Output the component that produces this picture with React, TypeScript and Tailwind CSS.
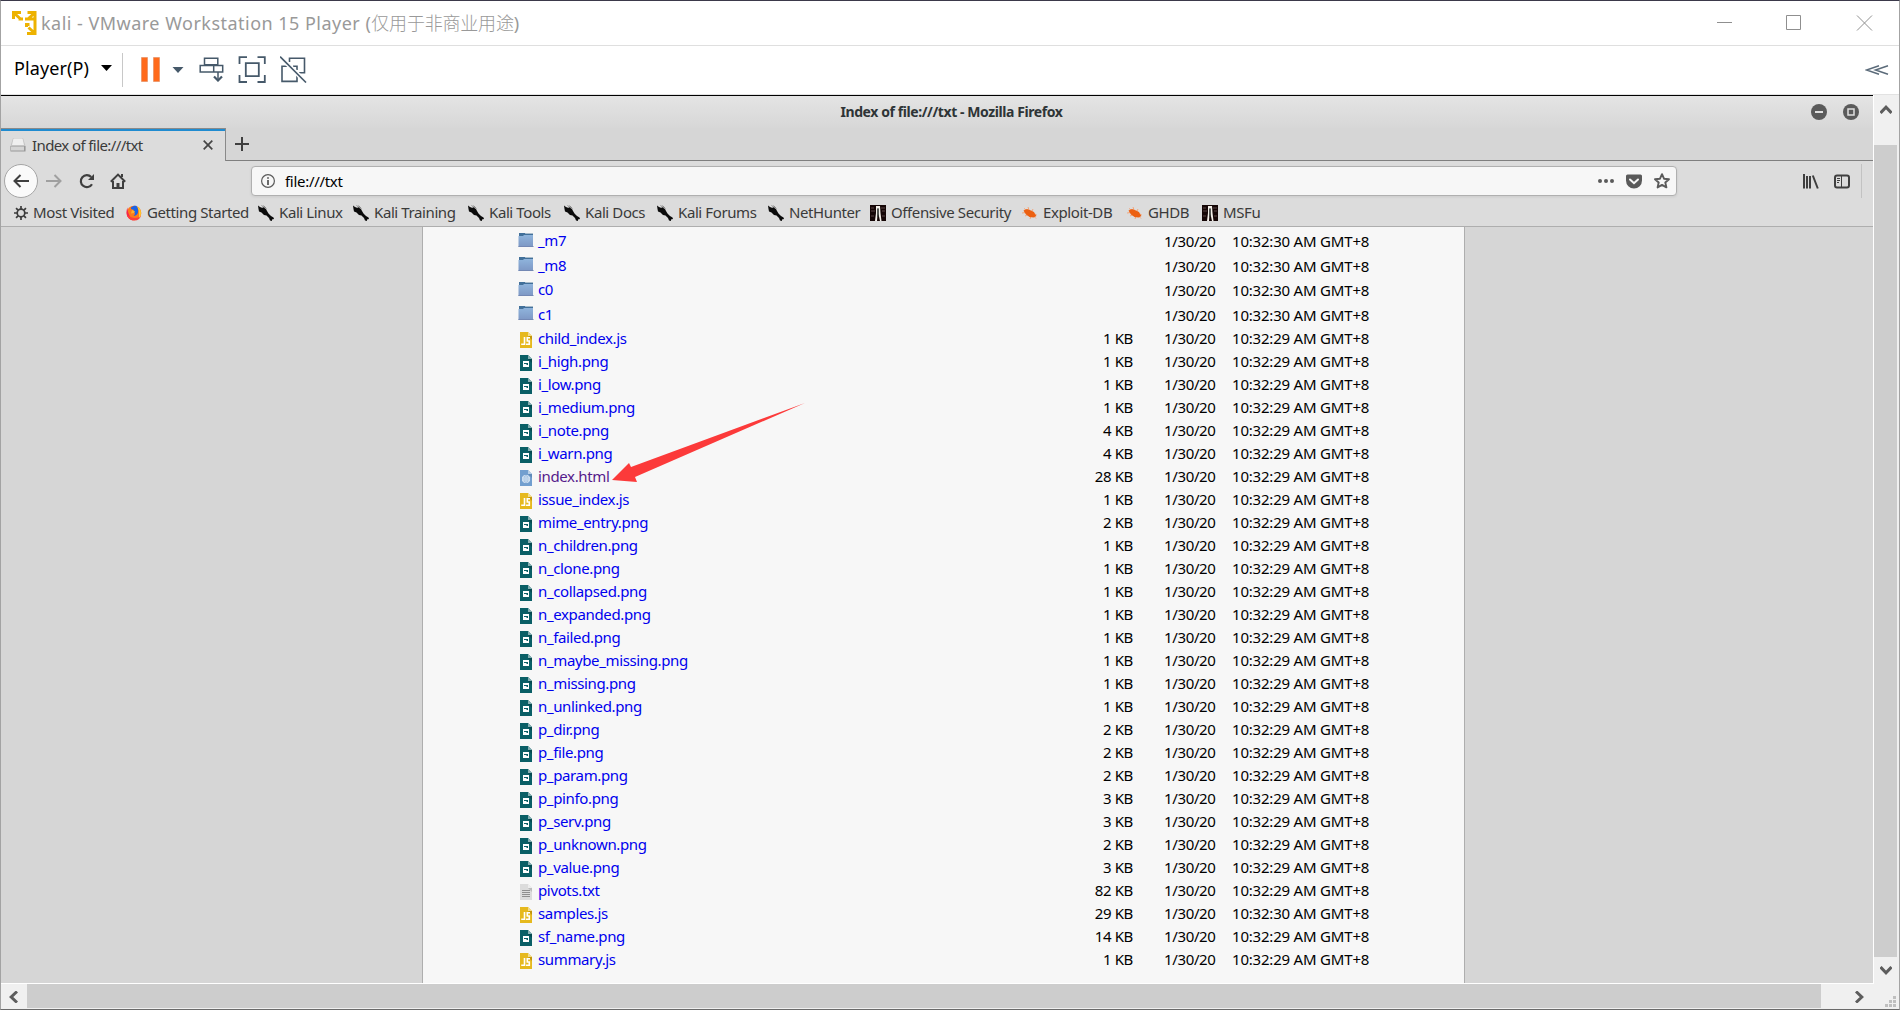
import React from 'react';

type FileKind = 'dir' | 'js' | 'png' | 'html' | 'txt';

interface Entry {
  name: string;
  kind: FileKind;
  size?: string;
  time?: string;
}

const ENTRIES: Entry[] = [
  { name: '_m7', kind: 'dir' },
  { name: '_m8', kind: 'dir' },
  { name: 'c0', kind: 'dir' },
  { name: 'c1', kind: 'dir' },
  { name: 'child_index.js', kind: 'js', size: '1 KB' },
  { name: 'i_high.png', kind: 'png', size: '1 KB' },
  { name: 'i_low.png', kind: 'png', size: '1 KB' },
  { name: 'i_medium.png', kind: 'png', size: '1 KB' },
  { name: 'i_note.png', kind: 'png', size: '4 KB' },
  { name: 'i_warn.png', kind: 'png', size: '4 KB' },
  { name: 'index.html', kind: 'html', size: '28 KB' },
  { name: 'issue_index.js', kind: 'js', size: '1 KB' },
  { name: 'mime_entry.png', kind: 'png', size: '2 KB' },
  { name: 'n_children.png', kind: 'png', size: '1 KB' },
  { name: 'n_clone.png', kind: 'png', size: '1 KB' },
  { name: 'n_collapsed.png', kind: 'png', size: '1 KB' },
  { name: 'n_expanded.png', kind: 'png', size: '1 KB' },
  { name: 'n_failed.png', kind: 'png', size: '1 KB' },
  { name: 'n_maybe_missing.png', kind: 'png', size: '1 KB' },
  { name: 'n_missing.png', kind: 'png', size: '1 KB' },
  { name: 'n_unlinked.png', kind: 'png', size: '1 KB' },
  { name: 'p_dir.png', kind: 'png', size: '2 KB' },
  { name: 'p_file.png', kind: 'png', size: '2 KB' },
  { name: 'p_param.png', kind: 'png', size: '2 KB' },
  { name: 'p_pinfo.png', kind: 'png', size: '3 KB' },
  { name: 'p_serv.png', kind: 'png', size: '3 KB' },
  { name: 'p_unknown.png', kind: 'png', size: '2 KB' },
  { name: 'p_value.png', kind: 'png', size: '3 KB' },
  { name: 'pivots.txt', kind: 'txt', size: '82 KB' },
  { name: 'samples.js', kind: 'js', size: '29 KB', time: '10:32:30 AM GMT+8' },
  { name: 'sf_name.png', kind: 'png', size: '14 KB' },
  { name: 'summary.js', kind: 'js', size: '1 KB' },
];

const FolderIcon = () => (
  <svg width="16" height="16" viewBox="0 0 16 16" className="-mt-[5px]">
    <defs>
      <linearGradient id="folder" x1="0" y1="0" x2="0" y2="1">
        <stop offset="0" stopColor="#8fb4dc" />
        <stop offset="1" stopColor="#7d97c4" />
      </linearGradient>
    </defs>
    <path d="M1 1h6l1 1h7v4H1z" fill="#42709a" />
    <path d="M8 1h7v1H8z" fill="#a9bccb" />
    <path d="M.5 4H5l1-1h9v12H.5z" fill="url(#folder)" />
    <path d="M.5 14h15v1H.5z" fill="#7388b4" />
  </svg>
);

const SHEET_COLORS = {
  js: ['#e6b91e', '#f3dc8e', '#c2960c'],
  png: ['#0a5f66', '#85afb2', '#064a50'],
  html: ['#729fcf', '#b8cfe7', '#5f8ab8'],
  txt: ['#dcdcdc', '#eeeeee', '#bcbcbc'],
};

const SheetIcon = ({ kind }: { kind: 'js' | 'png' | 'html' | 'txt' }) => {
  const [base, fold, shade] = SHEET_COLORS[kind];
  return (
    <svg width="16" height="16" viewBox="0 0 16 16">
      <path d="M2 0h8l4 4v12H2z" fill={base} />
      <path d="M10 0v4h4z" fill={fold} />
      <path d="M10 4h4v4z" fill={shade} />
      {kind === 'js' && (
        <path d="M6.500 5v7.300H3.200M12 5.800H9.300v3.200h2v3.300H8" fill="none" stroke="#fff" strokeWidth="1.600" />
      )}
      {kind === 'png' && (
        <>
          <path d="M5 6h6v6H5z" fill="#fff" />
          <path d="M6 8h4v2H9L8 9H6z" fill="#0a5f66" />
        </>
      )}
      {kind === 'html' && (
        <>
          <circle cx="8" cy="9" r="4" fill="#eaf2fa" />
          <path d="M4 9h8M8 5v8M5 7h6M5 11h6" stroke="#92b5db" strokeWidth=".6" fill="none" />
          <ellipse cx="8" cy="9" rx="2" ry="4" stroke="#92b5db" strokeWidth=".6" fill="none" />
        </>
      )}
      {kind === 'txt' && <path d="M4 6.500h8M4 8.500h8M4 10.500h8M4 12.500h8" stroke="#8f8f8f" />}
    </svg>
  );
};

const KaliIcon = () => (
  <svg width="16" height="16" viewBox="0 0 16 16">
    <path
      d="M0 .500l2 1.500 2.500 1L5 2l3 2 1 2 1.500 2.500L13 11l2.500 1.500.500 1.500-2 .500V16l-2-.500-1-2.500-2.500-2.500L6 10 3.500 7.500 1 6.500.500 4z"
      fill="#0b0b0b"
    />
    <path d="M3.500.500L7 3M5.500.500L8.500 3.500" stroke="#555" strokeWidth=".600" />
  </svg>
);

const OffsecIcon = () => (
  <svg width="16" height="16" viewBox="0 0 16 16">
    <path d="M0 0h16v16H0z" fill="#150606" />
    <path d="M1 3h3M1 6h4M11 3h4M12 6h3M1 11h3M12 11h3" stroke="#5d4646" />
    <path d="M6 1h4l.500 7 1 8H10L8.500 9V4h-1v5L7 16H5l1-8z" fill="#f5f0ea" />
    <path d="M7.500 3h1v9h-1z" fill="#26352f" />
  </svg>
);

const BugIcon = () => (
  <svg width="16" height="16" viewBox="0 0 16 16">
    <path
      d="M2 3.500l3 2M6 2l1 3M11 4l-1 2M0 8l4-.500M3 11l3-1.500M8 14l1-3M14 13.500l-2-2M14.500 9.500L12 9"
      stroke="#f2a67c"
      strokeWidth="1"
    />
    <path d="M1.500 5.500L5 4l4 1.500 3 1.500 1 2 1.500 2-3 1.500-4-.500L4 9.500 3 8z" fill="#ec6011" />
  </svg>
);

const FirefoxIcon = () => (
  <svg width="16" height="16" viewBox="0 0 16 16">
    <circle cx="8" cy="8" r="7.300" fill="#ff7a1a" />
    <path d="M1.500 2.500C-.500 7 0 14 7 15.400 4 12 1.500 8 1.500 2.500z" fill="#f5254b" />
    <path d="M1 10c1 3.500 4 5.500 7.500 5.500S14 13.500 15 11c-3 2.500-9 3-14-1z" fill="#ff3f3a" />
    <path d="M10.500 1c4.500 2 6 8 2.500 12 0-4 .500-8-2.500-12z" fill="#ffce2e" />
    <path d="M5 2.500C7 .500 9.500.500 10.500 1c1.500 2 2 4 1.500 6.500-.500 2.500-2.500 3.500-4.500 3C10 9 9 7.500 7 7l1-2-3-1z" fill="#1b63e6" />
    <path d="M6 5l3 1.500-1 1.500-3 .500z" fill="#ffb02a" />
  </svg>
);

const GearIcon = () => (
  <svg width="14" height="14" viewBox="0 0 14 14" fill="none" stroke="#3b3b3b">
    <circle cx="7" cy="7" r="3.800" strokeWidth="1.700" />
    <path
      d="M7 0v3M7 11v3M0 7h3M11 7h3M2.050 2.050l2 2M9.950 9.950l2 2M2.050 11.950l2-2M9.950 4.050l2-2"
      strokeWidth="1.700"
    />
  </svg>
);

const BOOKMARKS = [
  { label: 'Most Visited', icon: <GearIcon />, width: 'w-[112px]' },
  { label: 'Getting Started', icon: <FirefoxIcon />, width: 'w-[132px]' },
  { label: 'Kali Linux', icon: <KaliIcon />, width: 'w-[95px]' },
  { label: 'Kali Training', icon: <KaliIcon />, width: 'w-[115px]' },
  { label: 'Kali Tools', icon: <KaliIcon />, width: 'w-[96px]' },
  { label: 'Kali Docs', icon: <KaliIcon />, width: 'w-[93px]' },
  { label: 'Kali Forums', icon: <KaliIcon />, width: 'w-[111px]' },
  { label: 'NetHunter', icon: <KaliIcon />, width: 'w-[102px]' },
  { label: 'Offensive Security', icon: <OffsecIcon />, width: 'w-[152px]' },
  { label: 'Exploit-DB', icon: <BugIcon />, width: 'w-[105px]' },
  { label: 'GHDB', icon: <BugIcon />, width: 'w-[75px]' },
  { label: 'MSFu', icon: <OffsecIcon />, width: 'w-[80px]' },
];

const HostTitleBar = () => (
  <div className="flex h-[45px] shrink-0 items-center border-b border-[#dfdfdf] bg-white">
    <svg width="25" height="24" viewBox="0 0 25 24" className="ml-[11px] mt-[-1px]" fill="none" stroke="#edb200" strokeWidth="3">
      <path d="M1.500 8V1.500H9M2 2l6.500 6M15.500 1.500h7.500V8M22.500 2l-6 5.500M6.500 8H11M13 8h6M18.500 8h4.500v4M13 13.500h4.500M14.500 12v4M23 15.500v7h-8M22.500 22l-6-5.500M23 12v4" />
    </svg>
    <span className="ml-[4px] whitespace-nowrap text-[18px] leading-6 tracking-[0.480px] text-[#999]">
      kali - VMware Workstation 15 Player (
      <span className="text-[18px] font-light tracking-[-0.200px]">仅用于非商业用途</span>)
    </span>
    <svg width="156" height="16" viewBox="0 0 156 16" className="ml-auto mr-[26px] mt-[-1px]" fill="none" stroke="#8f8f8f">
      <path d="M0 7.500h15M69.500.500h14v14h-14zM140 .500l15 15M155 .500l-15 15" />
    </svg>
  </div>
);

const HostToolbar = () => (
  <div className="flex h-[49px] shrink-0 items-center border-b border-[#e2e2e2] bg-white">
    <span className="ml-[13px] mt-[-4px] w-[87px] whitespace-nowrap text-[18px] leading-6 tracking-[0.1px] text-black">Player(P)</span>
    <svg width="11" height="6" viewBox="0 0 11 6" className="mt-[-4px]">
      <path d="M0 0h11L5.500 6z" fill="#000" />
    </svg>
    <div className="ml-[10px] h-[34px] w-px bg-[#c8c8c8]" />
    <svg width="43" height="25" viewBox="0 0 43 25" className="ml-[18px] mt-[-2px]">
      <path d="M.500.500h6v24h-6zM12.500.500h6v24h-6z" fill="#ff6a1c" stroke="#e08a5c" strokeWidth=".6" />
      <path d="M31.500 10h11l-5.500 6z" fill="#46596a" />
    </svg>
    <svg width="25" height="25" viewBox="0 0 25 25" className="ml-[15px] mt-[-1px]" fill="none" stroke="#46596a" strokeWidth="1.500">
      <path d="M5.500 1.200h13.300v6.500H5.500zM1.200 8.500h13.500v6.500H1.200zM14.700 8.500h9v6.500h-9M19 15v9" />
      <path d="M15 19.500l4 4 4-4" strokeWidth="2.200" />
    </svg>
    <svg width="28" height="27" viewBox="0 0 28 27" className="ml-[14px] mt-[-2px]" fill="none" stroke="#46596a" strokeWidth="1.800">
      <path d="M1.500 8V1.200H9M19.500 1.200h7.300V8M26.800 19v7h-7.300M9 26H1.500v-7" />
      <path d="M7.800 7.200h13v13h-13z" />
    </svg>
    <svg width="27" height="27" viewBox="0 0 27 27" className="ml-[14px] mt-[-2px]" fill="none" stroke="#46596a" strokeWidth="1.600">
      <path d="M9.500 2.200h15v14.500H19M9.500 1.500V6M8 10.200H2v15.200h15V19M13 10.200h4V14" />
      <path d="M0 .500L26 26.500" stroke="#fff" strokeWidth="4.500" />
      <path d="M0 .500L26 26.500" />
    </svg>
    <svg width="24" height="10" viewBox="0 0 24 10" className="ml-auto mr-[10px]" fill="none" stroke="#5b6b7a" strokeWidth="1.500">
      <path d="M14 .800L1.500 5 14 9.200M23 .800L10.500 5 23 9.200" />
    </svg>
  </div>
);

const TitleAndTabs = () => (
  <div className="shrink-0 border-t border-black bg-[#d6d6d6]">
    <div className="flex h-[32px] items-center bg-gradient-to-b from-[#e4e4e4] to-[#d7d7d7]">
      <div className="w-[1786px] pl-[115px] text-center text-[14px] font-bold leading-5 tracking-[-0.42px] text-[#2e3436]">
        Index of file:///txt - Mozilla Firefox
      </div>
      <svg width="48" height="16" viewBox="0 0 48 16" className="ml-[24px]">
        <circle cx="8" cy="8" r="8" fill="#5a5a5a" />
        <path d="M4 7h8v2H4z" fill="#e0e0e0" />
        <circle cx="40" cy="8" r="8" fill="#5a5a5a" />
        <path d="M37 5h6v6h-6z" fill="none" stroke="#e0e0e0" strokeWidth="1.500" />
      </svg>
    </div>
    <div className="flex h-[33px]">
      <div className="flex w-[225px] items-center border-r border-t border-[#8a8a8a] bg-[#dcdcdc]">
        <div className="flex h-full w-full items-center border-t-2 border-[#1f8bd0] pb-[3px] pl-[9px] pr-[12px]">
          <svg width="16" height="14" viewBox="0 0 16 14">
            <path d="M3 0h10l2.500 8v4.500h-15V8z" fill="#c4c4c4" />
            <path d="M3.500.500h9L14 7H2z" fill="#efefef" />
            <path d="M.500 8h15v5.500H.500z" fill="#999" />
            <path d="M1 8.500h13v4H1z" fill="#d4d4d4" />
          </svg>
          <span className="ml-[6px] whitespace-nowrap text-[15px] leading-5 tracking-[-0.6px] text-[#3a3a3a]">Index of file:///txt</span>
          <svg width="10" height="10" viewBox="0 0 10 10" className="ml-auto" stroke="#454545" strokeWidth="1.700">
            <path d="M.700.700l8.600 8.600M9.300.700L.700 9.300" />
          </svg>
        </div>
      </div>
      <div className="flex-1 border-b border-[#7f7f7f] pl-[9px] pt-[9px]">
        <svg width="14" height="14" viewBox="0 0 14 14" stroke="#3f3f3f" strokeWidth="2">
          <path d="M0 7h14M7 0v14" />
        </svg>
      </div>
    </div>
  </div>
);

const NavBar = () => (
  <div className="flex h-[40px] shrink-0 items-center bg-[#dcdcdc]">
    <div className="ml-[3px] flex size-[34px] items-center justify-center rounded-full border border-[#a5a5a5] bg-[#fafafa]">
      <svg width="16" height="14" viewBox="0 0 16 14" fill="none" stroke="#3f3f3f" strokeWidth="2">
        <path d="M16 7H1.500M7.500 1l-6 6 6 6" />
      </svg>
    </div>
    <svg width="16" height="14" viewBox="0 0 16 14" className="ml-[8px]" fill="none" stroke="#a0a0a0" strokeWidth="2">
      <path d="M0 7h14.500M8.500 1l6 6-6 6" />
    </svg>
    <svg width="16" height="16" viewBox="0 0 16 16" className="ml-[17px]" fill="none" stroke="#3f3f3f" strokeWidth="2.200">
      <path d="M13 11.200A6 6 0 1 1 12.200 4" />
      <path d="M15 1v6H9z" fill="#3f3f3f" stroke="none" />
    </svg>
    <svg width="16" height="16" viewBox="0 0 16 16" className="ml-[15px]" fill="none" stroke="#3f3f3f" strokeWidth="2">
      <path d="M.800 8.800L8 1.600l7.200 7.200" />
      <path d="M3 8v7h10V8" />
      <path d="M6.500 15v-5h3v5z" fill="#3f3f3f" stroke="none" />
      <path d="M11 1h2v3h-2z" fill="#3f3f3f" stroke="none" />
    </svg>
    <div className="ml-[125px] flex h-[30px] w-[1426px] items-center rounded-[4px] border border-[#b0b0b0] bg-[#f7f7f7] pl-[9px] pr-[6px] shadow-[0_1px_3px_rgba(0,0,0,0.08)]">
      <svg width="14" height="14" viewBox="0 0 14 14" fill="none" stroke="#5a5a5a">
        <circle cx="7" cy="7" r="6.400" strokeWidth="1.200" />
        <path d="M7 6v5M7 3.200v1.600" strokeWidth="1.800" />
      </svg>
      <span className="ml-[10px] text-[15px] leading-5 tracking-[-0.3px] text-black">file:///txt</span>
      <svg width="16" height="4" viewBox="0 0 16 4" className="ml-auto" fill="#5a5a5a">
        <circle cx="2" cy="2" r="2" />
        <circle cx="8" cy="2" r="2" />
        <circle cx="14" cy="2" r="2" />
      </svg>
      <svg width="16" height="15" viewBox="0 0 16 15" className="ml-[12px]">
        <path d="M1.500.500h13a1.500 1.500 0 0 1 1.500 1.500v4.500a8 8 0 0 1-16 0V2A1.500 1.500 0 0 1 1.500.500z" fill="#5a5a5a" />
        <path d="M4 5.500l4 3.700 4-3.700" fill="none" stroke="#f7f7f7" strokeWidth="2" strokeLinecap="round" />
      </svg>
      <svg width="16" height="16" viewBox="0 0 16 16" className="ml-[12px]" fill="none" stroke="#5a5a5a" strokeWidth="1.900" strokeLinejoin="round">
        <path d="M8 1.200l2 4.500 5 .500-3.700 3.300 1.100 4.900L8 11.900l-4.400 2.500 1.100-4.900L1 6.200l5-.500z" />
      </svg>
    </div>
    <svg width="16" height="15" viewBox="0 0 16 15" className="ml-[126px]" fill="none" stroke="#3f3f3f" strokeWidth="2">
      <path d="M1 0v14.500M4 2v12.500M7 2v12.500M9.800 1.500l5 13" />
    </svg>
    <svg width="16" height="15" viewBox="0 0 16 15" className="ml-[15px]" fill="none" stroke="#3f3f3f">
      <rect x="1" y="1.500" width="14" height="12" rx="2" strokeWidth="2" />
      <path d="M7.500 2v11M3 4.500h3M3 6.500h3M3 8.500h2" />
    </svg>
    <div className="ml-[11px] h-[34px] w-px bg-[#c2c2c2]" />
  </div>
);

const BookmarksBar = () => (
  <div className="flex h-[26px] shrink-0 items-center border-b border-[#aeaeae] bg-[#dcdcdc] pb-[2px] pl-[13px] text-[15px] leading-5 tracking-[-0.4px] text-[#3a3a3a]">
    {BOOKMARKS.map((b) => (
      <div key={b.label} className={`flex shrink-0 items-center whitespace-nowrap ${b.width}`}>
        <span className="mr-[5px]">{b.icon}</span>
        <span className="-mt-[2px]">{b.label}</span>
      </div>
    ))}
  </div>
);

const DirectoryListing = () => (
  <div className="flex flex-1 justify-start overflow-hidden bg-[#d6d6d6] pl-[421px]">
    <div className="relative h-full w-[1043px] border-x border-[#aeaeae] bg-[#f7f7f7] pl-[95px] pt-[2px] text-[15px] tracking-[-0.36px] text-black">
      {ENTRIES.map((e) => (
        <div
          key={e.name}
          className={`flex items-center whitespace-nowrap ${e.kind === 'dir' ? 'h-[24.5px]' : 'h-[23px]'}`}
        >
          <span className="w-[20px] pt-[2px]">{e.kind === 'dir' ? <FolderIcon /> : <SheetIcon kind={e.kind} />}</span>
          <a
            className={`w-[500px] ${e.kind === 'html' ? 'text-[#551a8b]' : 'text-[#0000ee]'} ${e.kind === 'dir' ? '-mt-[2px]' : ''}`}
          >
            {e.name}
          </a>
          <span className="w-[95px] text-right">{e.size}</span>
          <span className="ml-[31px] w-[68px]">1/30/20</span>
          <span className="tracking-[-0.2px]">
            {e.time ?? (e.kind === 'dir' ? '10:32:30 AM GMT+8' : '10:32:29 AM GMT+8')}
          </span>
        </div>
      ))}
      <svg width="194" height="82" viewBox="0 0 194 82" className="absolute left-[189px] top-[176px]">
        <path d="M193 0L19 64l-2-4L0 77l25 2-2-5z" fill="#fc3a3a" />
      </svg>
    </div>
  </div>
);

const VerticalScrollbar = () => (
  <div className="flex w-[25px] shrink-0 flex-col border-l border-white bg-[#f0f0f0] pr-px">
    <div className="flex h-[50px] justify-center pt-[10px]">
      <svg width="12" height="9" viewBox="0 0 12 9" fill="none" stroke="#5d5d5d" strokeWidth="3">
        <path d="M.500 8L6 2.200 11.500 8" />
      </svg>
    </div>
    <div className="h-[812px] bg-[#cdcdcd]" />
    <div className="flex justify-center pt-[9px]">
      <svg width="12" height="9" viewBox="0 0 12 9" fill="none" stroke="#5d5d5d" strokeWidth="3">
        <path d="M.500 1L6 6.800 11.500 1" />
      </svg>
    </div>
  </div>
);

const HorizontalScrollbar = () => (
  <div className="flex h-[25px] shrink-0 items-center bg-[#f0f0f0]">
    <svg width="9" height="12" viewBox="0 0 9 12" className="ml-[8px]" fill="none" stroke="#5d5d5d" strokeWidth="3">
      <path d="M8 .500L2.200 6 8 11.500" />
    </svg>
    <div className="mb-px ml-[9px] h-[24px] w-[1794px] bg-[#cdcdcd]" />
    <svg width="9" height="12" viewBox="0 0 9 12" className="ml-[34px]" fill="none" stroke="#5d5d5d" strokeWidth="3">
      <path d="M1 .500L6.800 6 1 11.500" />
    </svg>
    <svg width="11" height="11" viewBox="0 0 11 11" className="ml-[21px] mt-[10px]" fill="#bfbfbf">
      <path d="M8 0h3v3H8zM4 4h3v3H4zM8 4h3v3H8zM0 8h3v3H0zM4 8h3v3H4zM8 8h3v3H8z" />
    </svg>
  </div>
);

export default function App() {
  return (
    <div className="flex h-[1010px] w-[1900px] flex-col overflow-hidden border border-t-[#3b394a] border-r-[#a3a3a3] border-b-[#6a6a6a] border-l-[#a3a3a3] bg-white font-['Noto_Sans','Noto_Sans_CJK_SC',sans-serif]">
      <HostTitleBar />
      <HostToolbar />
      <div className="flex min-h-0 flex-1 bg-[#f0f0f0]">
        <div className="flex w-[1872px] shrink-0 flex-col border-b border-white">
          <TitleAndTabs />
          <NavBar />
          <BookmarksBar />
          <DirectoryListing />
        </div>
        <VerticalScrollbar />
      </div>
      <HorizontalScrollbar />
    </div>
  );
}
